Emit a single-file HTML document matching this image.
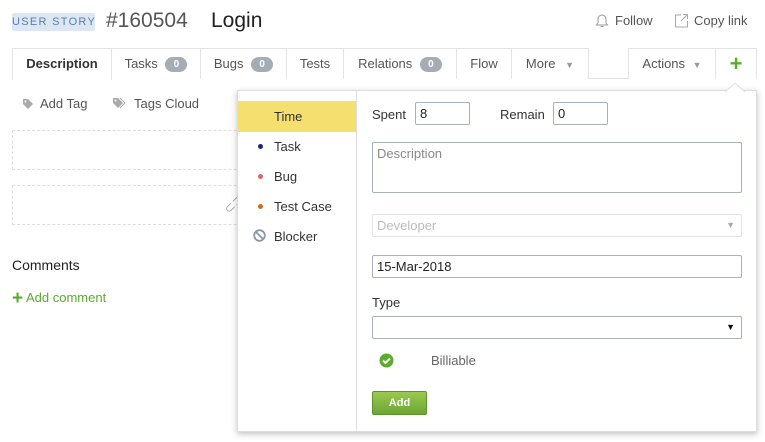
<!DOCTYPE html>
<html><head><meta charset="utf-8"><style>
*{box-sizing:border-box;margin:0;padding:0}
body{width:765px;height:442px;background:#fff;font-family:"Liberation Sans","DejaVu Sans",sans-serif;font-size:13px;color:#333;position:relative;overflow:hidden}
.a{position:absolute;white-space:nowrap}
.badge{left:12px;top:13px;width:83px;height:18px;background:#dde7f4;color:#5b7dab;font-size:11px;letter-spacing:1.3px;line-height:18px;text-align:center;border-radius:2px}
.tab{position:absolute;top:48px;height:31px;border:1px solid #e3e3e3;border-bottom:none;line-height:29px;text-align:center;color:#555;background:#fff}
.cnt{display:inline-block;background:#a4adb6;color:#fff;border-radius:9px;font-size:10px;font-weight:bold;width:22px;height:15px;line-height:15px;vertical-align:1px;margin-left:4px}
.line{left:12px;top:78px;width:744px;height:1px;background:#e3e3e3}
.dash{border:1px dashed #ddd;left:12px;width:300px;height:40px}
.pop{left:237px;top:90px;width:520px;height:342px;background:#fff;border:1px solid #ddd;box-shadow:0 2px 6px rgba(0,0,0,.25)}
.inp{position:absolute;border:1px solid #a9b1ba;border-radius:2px;height:23px;padding-left:4px;line-height:21px;color:#222;background:#fff}
.mi{left:36px;color:#333}
.dot{position:absolute;left:20px;width:5px;height:5px;border-radius:50%}
</style></head><body>
<div class="a badge">USER STORY</div>
<div class="a" style="left:106px;top:9px;font-size:21px;color:#555">#160504</div>
<div class="a" style="left:211px;top:9px;font-size:21px;color:#222">Login</div>
<svg class="a" style="left:595px;top:13px" width="14" height="15" viewBox="0 0 14 15"><path d="M3 10V6a4 4 0 0 1 8 0v4l1.5 2h-11z M5.5 13.5h3" fill="none" stroke="#999" stroke-width="1"/></svg>
<div class="a" style="left:615px;top:13px;color:#555">Follow</div>
<svg class="a" style="left:674px;top:13px" width="15" height="15" viewBox="0 0 15 15"><path d="M7 2H1.5v12h12V8 M9 1.5h4.5V6 M13.5 1.5L7 8" fill="none" stroke="#aaa" stroke-width="1"/></svg>
<div class="a" style="left:694px;top:13px;color:#555">Copy link</div>

<div class="a line"></div>
<div class="tab" style="left:12px;width:100px;height:32px;color:#333;font-weight:bold">Description</div>
<div class="tab" style="left:111px;width:90px">Tasks <span class="cnt">0</span></div>
<div class="tab" style="left:200px;width:87px">Bugs <span class="cnt">0</span></div>
<div class="tab" style="left:286px;width:58px">Tests</div>
<div class="tab" style="left:343px;width:114px">Relations <span class="cnt">0</span></div>
<div class="tab" style="left:456px;width:56px">Flow</div>
<div class="tab" style="left:511px;width:78px">More <span style="font-size:9px;color:#999;margin-left:6px">▼</span></div>
<div class="tab" style="left:628px;width:88px">Actions <span style="font-size:9px;color:#999;margin-left:4px">▼</span></div>
<div class="tab" style="left:715px;width:42px;color:#5aac2a;font-size:22px;font-weight:bold">+</div>

<svg class="a" style="left:22px;top:98px" width="12" height="12" viewBox="0 0 12 12"><path d="M1 1h5l5 5-5 5-5-5z" fill="#aaa"/><circle cx="3.5" cy="3.5" r="1" fill="#fff"/></svg>
<div class="a" style="left:40px;top:96px;color:#555">Add Tag</div>
<svg class="a" style="left:112px;top:97px" width="15" height="13" viewBox="0 0 15 13"><path d="M1 1h5l5 5-5 5-5-5z" fill="#aaa"/><path d="M8 1l5 5-5 5" fill="none" stroke="#aaa"/><circle cx="3.5" cy="3.5" r="1" fill="#fff"/></svg>
<div class="a" style="left:134px;top:96px;color:#555">Tags Cloud</div>

<div class="a dash" style="top:130px"></div>
<div class="a dash" style="top:185px"></div>
<div class="a" style="left:223px;top:196px;color:#aaa;font-size:13px;transform:rotate(-45deg)">⊂⊃</div>
<div class="a" style="left:12px;top:257px;font-size:14px;color:#222">Comments</div>
<div class="a" style="left:12px;top:288px;color:#5aac2a;font-size:13px"><span style="font-size:19px;font-weight:bold;vertical-align:-2px">+</span> Add comment</div>

<svg class="a" style="left:725px;top:83px;z-index:3" width="20" height="9"><path d="M0 9L10 0 20 9" fill="#fff" stroke="#ddd"/></svg>
<div class="a pop">
 <div class="a" style="left:118px;top:0;width:1px;height:340px;background:#ddd"></div>
 <div class="a" style="left:0;top:10px;width:118px;height:31px;background:#f5df6e"></div>
 <div class="a mi" style="top:18px">Time</div>
 <div class="dot" style="top:53px;background:#1b2a6e"></div><div class="a mi" style="top:48px">Task</div>
 <div class="dot" style="top:83px;background:#e0636b"></div><div class="a mi" style="top:78px">Bug</div>
 <div class="dot" style="top:113px;background:#d86b1a"></div><div class="a mi" style="top:108px">Test Case</div>
 <svg class="a" style="left:15px;top:138px" width="13" height="13"><circle cx="6.5" cy="6.5" r="5.3" fill="none" stroke="#8d97a4" stroke-width="1.8"/><path d="M3 3l7 7" stroke="#8d97a4" stroke-width="1.8"/></svg>
 <div class="a mi" style="top:138px">Blocker</div>

 <div class="a" style="left:134px;top:16px">Spent</div>
 <div class="inp" style="left:177px;top:11px;width:55px">8</div>
 <div class="a" style="left:262px;top:16px">Remain</div>
 <div class="inp" style="left:315px;top:11px;width:55px">0</div>
 <div class="inp" style="left:134px;top:51px;width:370px;height:51px;color:#888;padding-top:3px;line-height:16px">Description</div>
 <div class="inp" style="left:134px;top:123px;width:370px;border-color:#e3e3e3;color:#bbb">Developer<span style="position:absolute;right:6px;font-size:9px;color:#aaa">▼</span></div>
 <div class="inp" style="left:134px;top:164px;width:370px">15-Mar-2018</div>
 <div class="a" style="left:134px;top:204px">Type</div>
 <div class="inp" style="left:134px;top:225px;width:370px"><span style="position:absolute;right:6px;font-size:9px;color:#111">▼</span></div>
 <svg class="a" style="left:141px;top:262px" width="15" height="15"><circle cx="7.5" cy="7.5" r="7" fill="#5aac2a"/><path d="M4 7.5l2.5 2.5 4.5-4.5" fill="none" stroke="#fff" stroke-width="2"/></svg>
 <div class="a" style="left:193px;top:262px;color:#666">Billiable</div>
 <div class="a" style="left:134px;top:300px;width:55px;height:24px;border:1px solid #5e932c;border-radius:2px;background:linear-gradient(#9ac94f,#6da534);color:#fff;font-size:11px;font-weight:bold;text-align:center;line-height:22px">Add</div>
</div>
</body></html>
